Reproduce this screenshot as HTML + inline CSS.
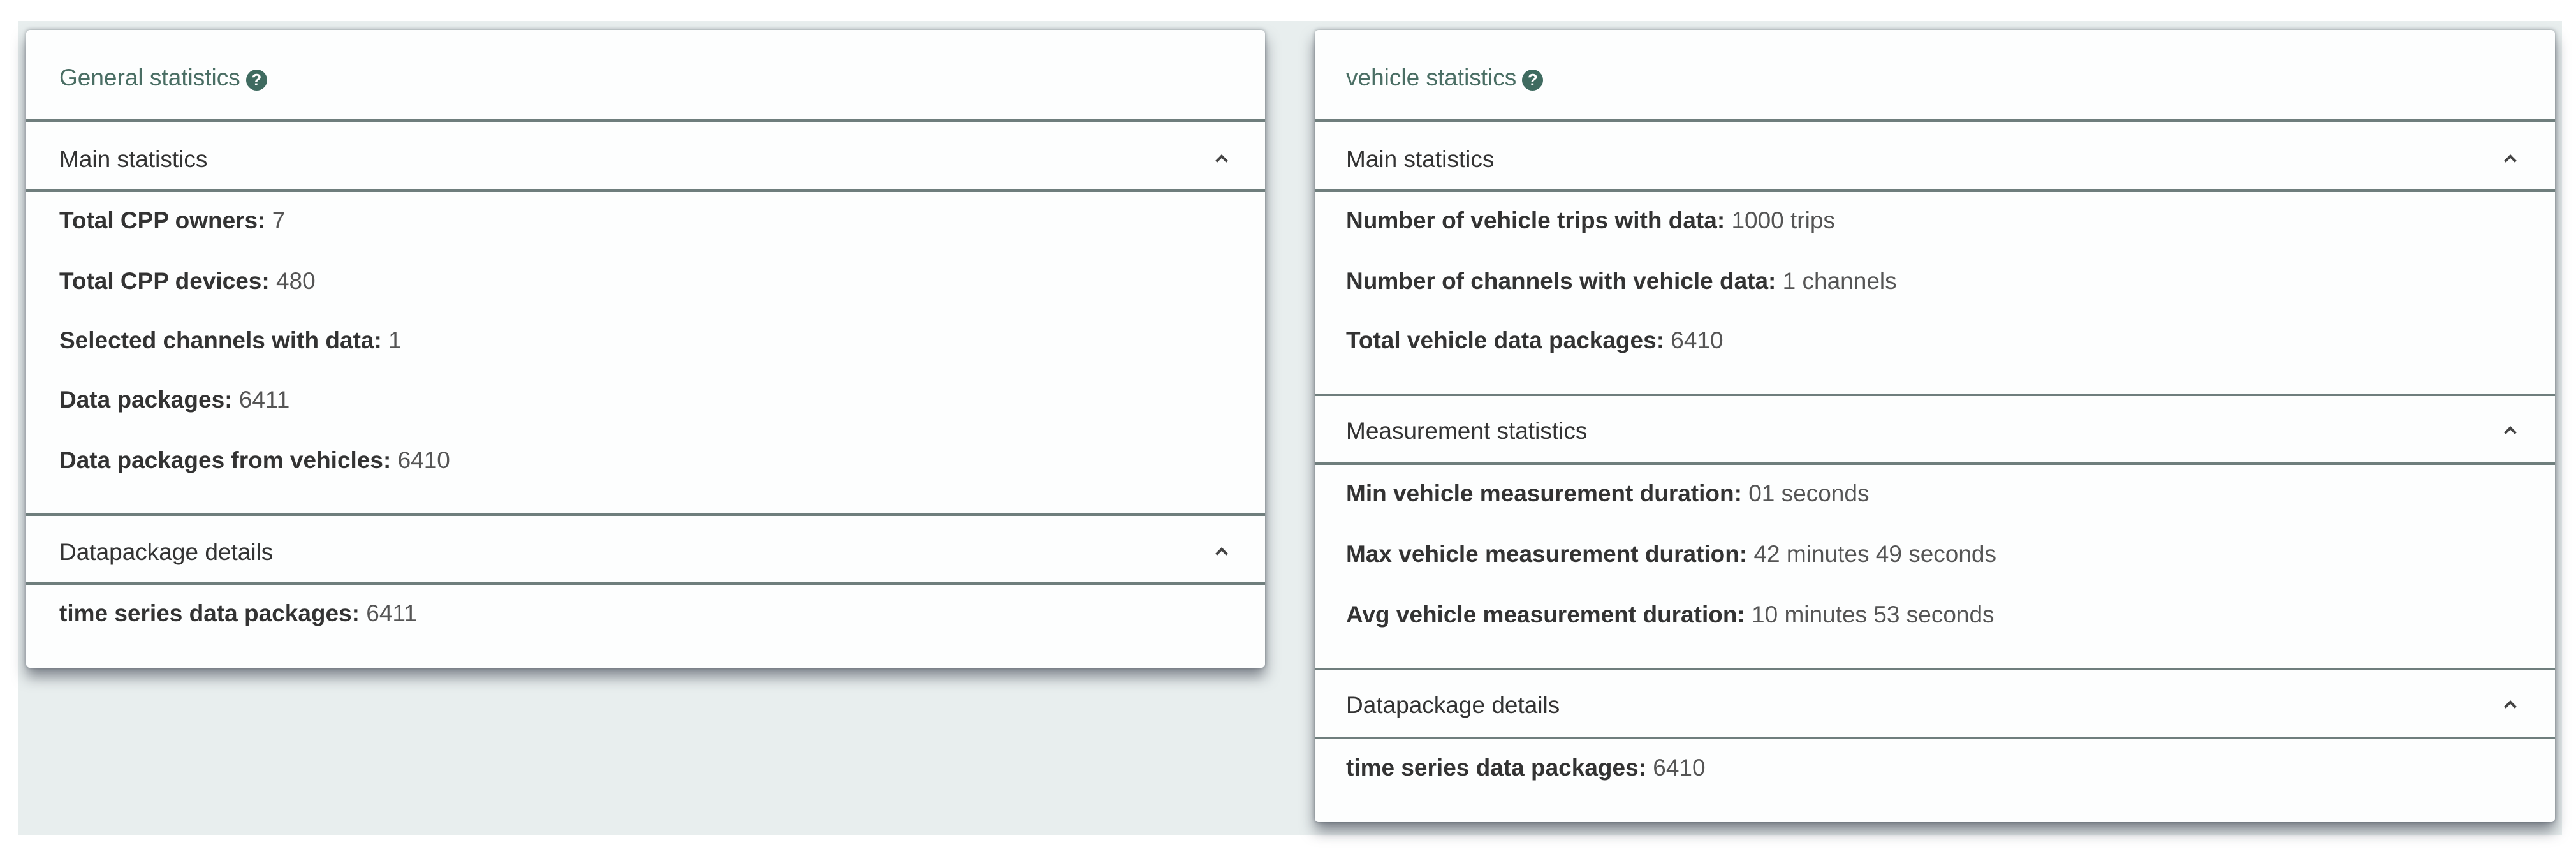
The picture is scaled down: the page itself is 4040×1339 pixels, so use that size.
<!DOCTYPE html>
<html><head><meta charset="utf-8"><style>
*{margin:0;padding:0;box-sizing:border-box}
html,body{width:4040px;height:1339px;overflow:hidden;background:#fff}
body{font-family:"Liberation Sans",sans-serif;color:#333;font-size:37px}
.bg{position:absolute;left:28px;top:33px;width:3990px;height:1276px;background:#e8eeee}
.card{position:absolute;background:#fdfefe;border-radius:6px;box-shadow:0 14px 22px rgba(40,45,60,.55),0 0 6px rgba(60,70,80,.5)}
.t{position:absolute;white-space:nowrap;line-height:1}
.ttl{color:#4a6e64}
.line{position:absolute;left:0;right:0;height:4px;background:#6f7e7d}
b{font-weight:bold;color:#333}
.v{color:#555}
.ch{position:absolute;width:14px;height:14px;border-left:4px solid #444;border-top:4px solid #444;transform:rotate(45deg)}
.q{display:inline-block;width:33px;height:33px;border-radius:50%;background:#3f6b60;color:#fff;font-size:26px;font-weight:bold;text-align:center;line-height:33px;vertical-align:0px;margin-left:9px}
</style></head><body>
<div class="bg"></div>

<div class="card" style="left:41px;top:47px;width:1943px;height:1000px">
  <div class="t ttl" style="left:52px;top:56px">General statistics<span class="q">?</span></div>
  <div class="line" style="top:140px"></div>
  <div class="t" style="left:52px;top:184px">Main statistics</div>
  <div class="ch" style="left:1868px;top:198px"></div>
  <div class="line" style="top:250px"></div>
  <div class="t" style="left:52px;top:280px"><b>Total CPP owners:</b> <span class="v">7</span></div>
  <div class="t" style="left:52px;top:375px"><b>Total CPP devices:</b> <span class="v">480</span></div>
  <div class="t" style="left:52px;top:468px"><b>Selected channels with data:</b> <span class="v">1</span></div>
  <div class="t" style="left:52px;top:561px"><b>Data packages:</b> <span class="v">6411</span></div>
  <div class="t" style="left:52px;top:656px"><b>Data packages from vehicles:</b> <span class="v">6410</span></div>
  <div class="line" style="top:758px"></div>
  <div class="t" style="left:52px;top:800px">Datapackage details</div>
  <div class="ch" style="left:1868px;top:814px"></div>
  <div class="line" style="top:866px"></div>
  <div class="t" style="left:52px;top:896px"><b>time series data packages:</b> <span class="v">6411</span></div>
</div>

<div class="card" style="left:2062px;top:47px;width:1945px;height:1242px">
  <div class="t ttl" style="left:49px;top:56px">vehicle statistics<span class="q">?</span></div>
  <div class="line" style="top:140px"></div>
  <div class="t" style="left:49px;top:184px">Main statistics</div>
  <div class="ch" style="left:1868px;top:198px"></div>
  <div class="line" style="top:250px"></div>
  <div class="t" style="left:49px;top:280px"><b>Number of vehicle trips with data:</b> <span class="v">1000 trips</span></div>
  <div class="t" style="left:49px;top:375px"><b>Number of channels with vehicle data:</b> <span class="v">1 channels</span></div>
  <div class="t" style="left:49px;top:468px"><b>Total vehicle data packages:</b> <span class="v">6410</span></div>
  <div class="line" style="top:570px"></div>
  <div class="t" style="left:49px;top:610px">Measurement statistics</div>
  <div class="ch" style="left:1868px;top:624px"></div>
  <div class="line" style="top:678px"></div>
  <div class="t" style="left:49px;top:708px"><b>Min vehicle measurement duration:</b> <span class="v">01 seconds</span></div>
  <div class="t" style="left:49px;top:803px"><b>Max vehicle measurement duration:</b> <span class="v">42 minutes 49 seconds</span></div>
  <div class="t" style="left:49px;top:898px"><b>Avg vehicle measurement duration:</b> <span class="v">10 minutes 53 seconds</span></div>
  <div class="line" style="top:1000px"></div>
  <div class="t" style="left:49px;top:1040px">Datapackage details</div>
  <div class="ch" style="left:1868px;top:1054px"></div>
  <div class="line" style="top:1108px"></div>
  <div class="t" style="left:49px;top:1138px"><b>time series data packages:</b> <span class="v">6410</span></div>
</div>
</body></html>
